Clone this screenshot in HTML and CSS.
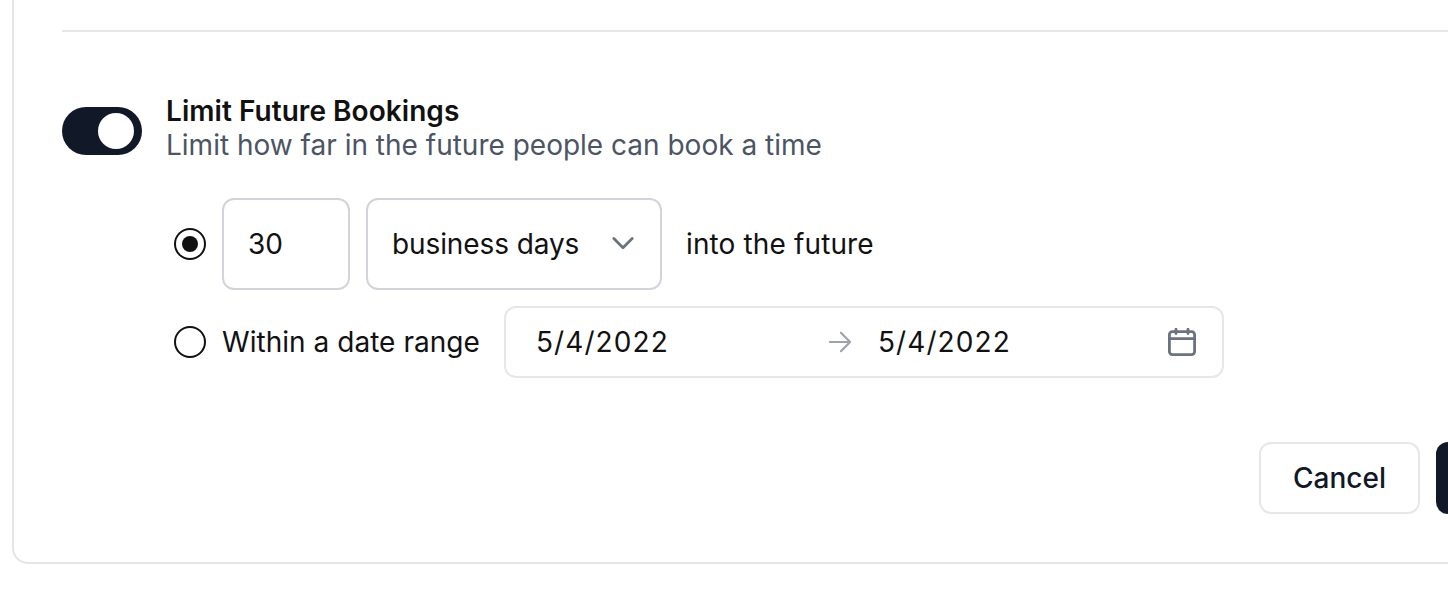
FILE: index.html
```html
<!DOCTYPE html>
<html lang="en">
<head>
<meta charset="utf-8">
<title>Limit Future Bookings</title>
<link rel="stylesheet" href="styles.css">
</head>
<body>
<main class="card">
  <hr class="divider">
  <section class="setting">
    <span class="toggle"><span class="thumb"></span></span>
    <div class="setting-text">
      <h2 class="title">Limit Future Bookings</h2>
      <p class="desc">Limit how far in the future people can book a time</p>
    </div>
  </section>
  <div class="options">
    <div class="option option-first">
      <span class="radio radio-on"></span>
      <span class="field field-number">30</span>
      <span class="field field-select">business days
        <svg class="chevron" viewBox="0 0 24 24" fill="none" stroke="#6b7280" stroke-width="3" stroke-linecap="round" stroke-linejoin="round"><path d="M2 6l10 10L22 6"/></svg>
      </span>
      <span class="suffix">into the future</span>
    </div>
    <div class="option option-second">
      <span class="radio"></span>
      <span class="label">Within a date range</span>
      <div class="range">
        <span class="date date-start">5/4/2022</span>
        <svg class="arrow" viewBox="0 0 24 24" fill="none" stroke="#9ca3af" stroke-width="2.4" stroke-linecap="round" stroke-linejoin="round"><path d="M1 12h22M13 2l10 10-10 10"/></svg>
        <span class="date date-end">5/4/2022</span>
        <svg class="calendar" viewBox="0 0 28 28" fill="none" stroke="#6b7280" stroke-width="2.8" stroke-linecap="round" stroke-linejoin="round"><rect x="1.4" y="3.6" width="25.2" height="23" rx="3"/><path d="M1.4 10.6h25.2M8 1.2v4.4M20 1.2v4.4"/></svg>
      </div>
    </div>
  </div>
  <div class="actions">
    <button class="btn btn-cancel">Cancel</button>
    <button class="btn btn-save" aria-label="Save"></button>
  </div>
</main>
</body>
</html>
```
FILE: styles.css
```css
* { box-sizing: border-box; }
html, body { margin: 0; height: 592px; overflow: hidden; background: #fff; }
body {
  font-family: Inter, "Liberation Sans", sans-serif;
  color: #111;
  font-size: 28px;
}
.card {
  width: 1646px;
  height: 564px;
  margin-left: 12px;
  padding: 30px 60px 0 48px;
  border: 2px solid #e5e5e5;
  border-top: 0;
  border-radius: 0 0 16px 16px;
}
.divider { height: 2px; margin: 0; border: 0; background: #e5e7eb; }
.setting { display: flex; margin-top: 59px; }
.toggle {
  display: flex;
  align-items: center;
  justify-content: flex-end;
  width: 80px;
  height: 48px;
  margin-top: 16px;
  padding-right: 8px;
  border-radius: 24px;
  background: #111827;
}
.thumb {
  width: 36px;
  height: 36px;
  border-radius: 50%;
  background: #fff;
}
.setting-text { margin-left: 24px; }
.title { margin: 0; font-size: 28px; line-height: 40px; font-weight: 600; color: #111; letter-spacing: 0.05px; }
.desc { margin: -6px 0 0; font-size: 28px; line-height: 40px; color: #4b5563; }
.options { margin: 33px 0 0 112px; }
.option { display: flex; align-items: center; }
.option-first { height: 92px; }
.option-second { height: 72px; margin-top: 16px; }
.radio {
  flex: none;
  width: 32px;
  height: 32px;
  border: 2px solid #111;
  border-radius: 50%;
  background: #fff;
}
.radio-on { display: flex; align-items: center; justify-content: center; }
.radio-on::after { content: ""; width: 16px; height: 16px; border-radius: 50%; background: #111; }
.field {
  display: flex;
  align-items: center;
  height: 92px;
  margin-left: 16px;
  border: 2px solid #d1d5db;
  border-radius: 12px;
}
.field-number { width: 128px; padding-left: 24px; }
.field-select { width: 296px; padding-left: 24px; letter-spacing: -0.1px; }
.chevron { width: 22px; height: 22px; margin-left: auto; margin-right: 26px; }
.suffix { margin-left: 24px; letter-spacing: 0.13px; }
.label { margin-left: 16px; letter-spacing: 0.04px; }
.range {
  display: flex;
  align-items: center;
  width: 720px;
  height: 72px;
  margin-left: 24px;
  padding-left: 30px;
  border: 2px solid #e5e7eb;
  border-radius: 12px;
}
.date { letter-spacing: 1.1px; }
.date-start { width: 292px; }
.arrow { flex: none; width: 24px; height: 22px; }
.date-end { margin-left: 26px; }
.calendar { flex: none; width: 28px; height: 28px; margin-left: auto; margin-right: 26px; }
.actions { display: flex; justify-content: flex-end; gap: 16px; margin-top: 64px; }
.btn {
  height: 72px;
  border-radius: 12px;
  font: 500 28px Inter, "Liberation Sans", sans-serif;
}
.btn-cancel { width: 161px; padding: 0; background: #fff; border: 2px solid #e5e7eb; color: #111827; }
.btn-save { width: 160px; background: #111827; border: 0; color: #fff; }
```
